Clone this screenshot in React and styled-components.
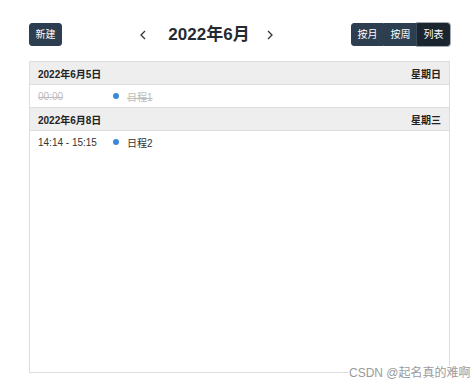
import React from 'react';
import styled, { createGlobalStyle } from 'styled-components';

const Global = createGlobalStyle`
  html, body { margin: 0; padding: 0; background: #fff; }
  body { font-family: "Liberation Sans", "Noto Sans CJK SC", sans-serif; color: #222; }
`;

const Page = styled.div`
  position: relative;
  width: 474px;
  height: 387px;
  padding: 23px 0 0 29px;
  box-sizing: border-box;
  overflow: hidden;
`;

const Calendar = styled.div`
  width: 421px;
  display: flex;
  flex-direction: column;
`;

const Toolbar = styled.div`
  display: flex;
  justify-content: space-between;
  align-items: center;
  height: 23px;
  margin-bottom: 15px;
`;

const Button = styled.button`
  height: 23px;
  padding: 0 5.5px;
  border: 1px solid ${p => (p.$active ? '#1a252f' : '#2c3e50')};
  background: ${p => (p.$active ? '#1a252f' : '#2c3e50')};
  color: #fff;
  font-family: "Liberation Sans", "Noto Sans CJK SC", sans-serif;
  font-size: 10px;
  line-height: 21px;
  border-radius: 3px;
  cursor: pointer;
  box-shadow: ${p => (p.$active ? '0 0 0 1px rgba(76, 91, 106, 0.5)' : 'none')};
  position: relative;
  z-index: ${p => (p.$active ? 1 : 0)};
`;

const Group = styled.div`
  display: flex;
  & > ${Button} { border-radius: 0; }
  & > ${Button}:first-child { border-radius: 3px 0 0 3px; }
  & > ${Button}:last-child { border-radius: 0 3px 3px 0; }
`;

const Center = styled.div`
  display: flex;
  align-items: center;
`;

const Nav = styled.button`
  width: 10px;
  height: 23px;
  padding: 0;
  border: 0;
  background: none;
  display: flex;
  align-items: center;
  justify-content: center;
  cursor: pointer;
`;

const Title = styled.h2`
  margin: 0 15px 0 20px;
  font-size: 17px;
  font-weight: bold;
  color: #262b33;
  line-height: 23px;
`;

const Table = styled.div`
  height: 312px;
  border: 1px solid #ddd;
  box-sizing: border-box;
`;

const DayHeader = styled.div`
  display: flex;
  justify-content: space-between;
  align-items: center;
  height: 22px;
  padding: 0 8px;
  background: #eeeeee;
  border-bottom: 1px solid #ddd;
  font-size: 10px;
  font-weight: bold;
  color: #222;
`;

const EventRow = styled.div`
  display: flex;
  align-items: center;
  height: 22px;
  padding: 0 8px;
  border-bottom: ${p => (p.$last ? '0' : '1px solid #ddd')};
  font-size: 10px;
  color: ${p => (p.$past ? '#bbb' : '#333')};
  text-decoration: ${p => (p.$past ? 'line-through' : 'none')};
`;

const Time = styled.span`
  width: 75px;
`;

const Dot = styled.span`
  width: 6px;
  height: 6px;
  border-radius: 50%;
  background: #3788d8;
  margin: 0 8px 0 0;
`;

const Watermark = styled.div`
  position: absolute;
  left: 348px;
  top: 366px;
  padding: 0 1px;
  background: #fff;
  font-size: 12px;
  color: #9a9a9a;
  line-height: 15px;
  white-space: nowrap;
`;

const Chevron = ({ dir }) => (
  <svg width="8" height="12" viewBox="0 0 8 12" fill="none" stroke="#333" strokeWidth="1.3">
    {dir === 'left' ? <path d="M6 2 L2 6 L6 10" /> : <path d="M2 2 L6 6 L2 10" />}
  </svg>
);

const days = [
  { date: '2022年6月5日', week: '星期日', time: '00:00', title: '日程1', past: true },
  { date: '2022年6月8日', week: '星期三', time: '14:14 - 15:15', title: '日程2', past: false },
];

export default function App() {
  return (
    <>
      <Global />
      <Page>
        <Calendar>
          <Toolbar>
            <Button>新建</Button>
            <Center>
              <Nav><Chevron dir="left" /></Nav>
              <Title>2022年6月</Title>
              <Nav><Chevron dir="right" /></Nav>
            </Center>
            <Group>
              <Button>按月</Button>
              <Button>按周</Button>
              <Button $active>列表</Button>
            </Group>
          </Toolbar>
          <Table>
            {days.map((d, i) => (
              <React.Fragment key={d.date}>
                <DayHeader>
                  <span>{d.date}</span>
                  <span>{d.week}</span>
                </DayHeader>
                <EventRow $past={d.past} $last={i === days.length - 1}>
                  <Time>{d.time}</Time>
                  <Dot />
                  <span>{d.title}</span>
                </EventRow>
              </React.Fragment>
            ))}
          </Table>
        </Calendar>
        <Watermark>CSDN @起名真的难啊</Watermark>
      </Page>
    </>
  );
}
